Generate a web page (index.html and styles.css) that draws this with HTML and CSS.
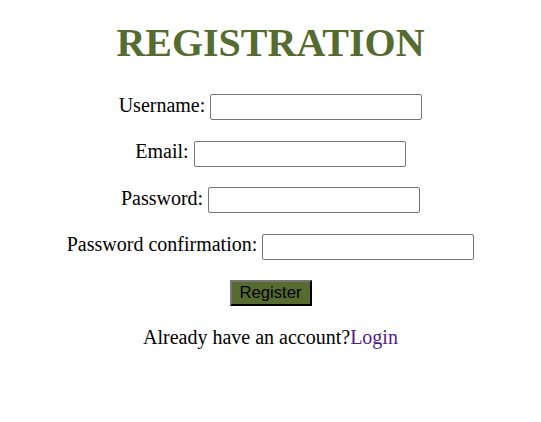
FILE: index.html
```html
<!DOCTYPE html>
<html>
<head>
<meta charset="utf-8">
<link rel="stylesheet" href="styles.css">
</head>
<body>
<div class="page">
  <h1 class="title">REGISTRATION</h1>
  <form class="form">
    <p class="row"><label>Username:</label> <input type="text" class="field"></p>
    <p class="row"><label>Email:</label> <input type="email" class="field"></p>
    <p class="row"><label>Password:</label> <input type="password" class="field"></p>
    <p class="row"><label>Password confirmation:</label> <input type="password" class="field"></p>
    <p class="row"><button type="submit" class="btn">Register</button></p>
  </form>
  <p class="row">Already have an account?<a href="#" class="link">Login</a></p>
</div>
</body>
</html>
```

FILE: styles.css
```css
body {
  margin: 8px;
  font-family: "Liberation Serif", "Times New Roman", serif;
  font-size: 20px;
  color: #000;
  background: #fff;
}
.page {
  text-align: center;
}
.title {
  font-size: 40px;
  font-weight: bold;
  color: #556b2f;
  margin: 11px 0 28px;
}
.form {
  margin: 0;
}
.row {
  margin: 20px 0;
}
.field {
  box-sizing: border-box;
  width: 212px;
  height: 26px;
  padding: 1px 2px;
  border: 1px solid #767676;
  border-radius: 2px;
  vertical-align: middle;
  font-size: 13px;
}
.btn {
  box-sizing: border-box;
  font-family: "Liberation Sans", Arial, sans-serif;
  font-size: 16.7px;
  background: #556b2f;
  color: #000;
  border: 2px outset #222;
  width: 82px;
  height: 26px;
  padding: 0;
  vertical-align: middle;
}
.link {
  color: #551a8b;
  text-decoration: none;
}
```
